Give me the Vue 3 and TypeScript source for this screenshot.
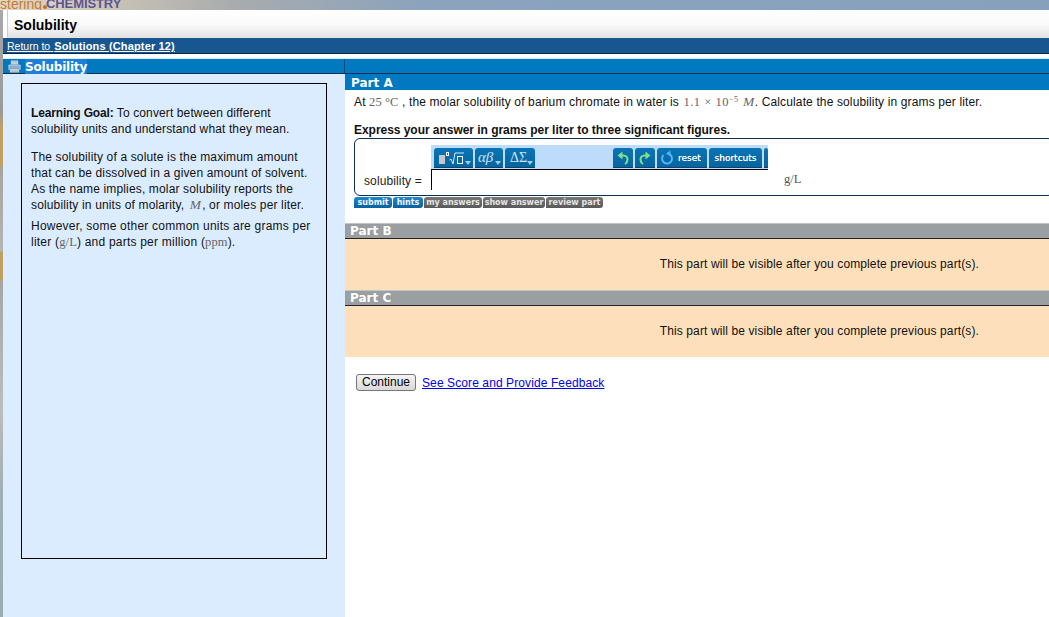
<script setup lang="ts">
const tabs = [
  { label: 'submit', blue: true, width: 38 },
  { label: 'hints', blue: true, width: 30 },
  { label: 'my answers', blue: false, width: 58 },
  { label: 'show answer', blue: false, width: 62 },
  { label: 'review part', blue: false, width: 57 },
]
const lockedParts = ['Part B', 'Part C']
</script>

<template>
  <div class="page">
    <div class="brand"><span class="ster">stering</span><span class="dot"></span><span class="chem">CHEMISTRY</span></div>
    <div class="body-wrap">
      <div class="edge"></div>
      <div class="main">
        <div class="title"><h1>Solubility</h1></div>
        <div class="crumb"><a href="#"><span class="ret">Return to</span> <b>Solutions (Chapter 12)</b></a></div>
        <div class="head">
          <div class="head-left">
            <svg class="printer" width="13" height="13" viewBox="0 0 13 13">
              <path d="M3 .5h7v4H3z" fill="#dfe9f3" stroke="#7f9db8" stroke-width=".7" />
              <path d="M4 1.800h5M4 3h5" stroke="#7f9db8" stroke-width=".6" />
              <path d="M.8 5h11.400v4.500H.8z" fill="#8fb0cc" stroke="#c9d9e8" stroke-width=".7" />
              <path d="M2 8.500h9v4H2z" fill="#e6eef6" stroke="#6f90ae" stroke-width=".7" />
              <path d="M3 10h7M3 11.300h7" stroke="#6f90ae" stroke-width=".6" />
            </svg>
            <span class="side-title">Solubility</span>
          </div>
        </div>
        <div class="columns">
          <aside class="side">
            <div class="goal">
              <p class="first"><b>Learning Goal:</b> To convert between different solubility units and understand what they mean.</p>
              <p class="second">The solubility of a solute is the maximum amount that can be dissolved in a given amount of solvent. As the name implies, molar solubility reports the solubility in units of molarity, <i class="m big side-m">M</i>, or moles per liter.</p>
              <p class="third">However, some other common units are grams per liter (<span class="m">g/L</span>) and parts per million (<span class="m">ppm</span>).</p>
            </div>
          </aside>
          <section class="content">
            <div class="part-bar blue">Part A</div>
            <div class="question">
              At <span class="m">25 °C</span> , the molar solubility of barium chromate in water is <span class="m gap">1.1 × 10<sup>−5</sup> <i class="big">M</i></span>. Calculate the solubility in grams per liter.
            </div>
            <div class="express">Express your answer in grams per liter to three significant figures.</div>
            <div class="answer-box">
              <span class="var">solubility =</span>
              <div class="editor">
                <div class="toolbar">
                  <div class="tool tool-tpl">
                    <svg width="26" height="14" viewBox="0 0 26 14" fill="none">
                      <rect x="0" y="4" width="6" height="9" fill="#c4c8cc" />
                      <rect x="7.500" y="1.500" width="2" height="3" stroke="#fff" stroke-width="1" />
                      <path d="M10.500 9l1.500-1 2 5L16 2h9" stroke="#d8e8f8" stroke-width="1" />
                      <rect x="18.500" y="5.500" width="5" height="7" stroke="#f0f6fc" stroke-width="1" />
                    </svg>
                    <span class="caret"></span>
                  </div>
                  <div class="tool tool-greek"><i>αβ</i><span class="caret"></span></div>
                  <div class="tool tool-greek delta">ΔΣ<span class="caret"></span></div>
                  <div class="spacer"></div>
                  <div class="tool tool-arrow">
                    <svg width="14" height="15" viewBox="0 0 14 15" fill="none"><path d="M6.500 1.500 1.500 5.500l5 4z" fill="#7fe08a" /><path d="M5.500 5.500h2c2.500 0 4 2 4 4 0 2-1 3.500-2.500 4.500" stroke="#7fe08a" stroke-width="2" /></svg>
                  </div>
                  <div class="tool tool-arrow">
                    <svg width="14" height="15" viewBox="0 0 14 15" fill="none"><path d="M7.500 1.500l5 4-5 4z" fill="#7fe08a" /><path d="M8.500 5.500h-2c-2.500 0-4 2-4 4 0 2 1 3.500 2.500 4.500" stroke="#7fe08a" stroke-width="2" /></svg>
                  </div>
                  <div class="tool tool-reset">
                    <svg width="14" height="15" viewBox="0 0 14 15" fill="none"><path d="M3.500 5a5 5 0 1 0 6-.8" stroke="#55b4f2" stroke-width="2" /><path d="M10.500 .5v6l-4.500-3z" fill="#55b4f2" /></svg>
                    <span>reset</span>
                  </div>
                  <div class="tool tool-text">shortcuts</div>
                  <div class="tool tool-stub"></div>
                </div>
                <div class="input-line"></div>
              </div>
              <span class="unit">g/L</span>
            </div>
            <div class="tabs">
              <span v-for="t in tabs" :key="t.label" class="tab" :class="{ 'tab-blue': t.blue }" :style="{ width: t.width + 'px' }">{{ t.label }}</span>
            </div>
            <template v-for="p in lockedParts" :key="p">
              <div class="part-bar grey">{{ p }}</div>
              <div class="locked">This part will be visible after you complete previous part(s).</div>
            </template>
            <div class="actions">
              <button class="continue" type="button">Continue</button>
              <a class="score" href="#">See Score and Provide Feedback</a>
            </div>
          </section>
        </div>
      </div>
    </div>
  </div>
</template>

<style>
html, body { margin: 0; padding: 0; overflow: hidden; background: #fff; }
</style>

<style scoped>
.page { width: 1049px; height: 617px; overflow: hidden; display: flex; flex-direction: column; font-family: "Liberation Sans", Arial, sans-serif; font-size: 12px; color: #000; background: #fff; }
.brand { height: 10px; flex: none; overflow: hidden; display: flex; align-items: flex-end; background: linear-gradient(90deg, #e0d8c8 0, #c5c0b4 12%, #a9acae 22%, #8ba3bd 40%, #87a1bd 100%); font-weight: bold; line-height: 14px; }
.ster { color: #c97a2c; font-size: 14px; font-weight: normal; margin-bottom: -1px; }
.dot { width: 4px; height: 4px; border-radius: 50%; background: #c6702a; margin: 0 -1px 1px 1px; flex: none; }
.chem { color: #5d5590; font-size: 13px; letter-spacing: -.1px; margin-bottom: -1px; }
.body-wrap { flex: 1; display: flex; min-height: 0; }
.edge { width: 3px; flex: none; background: linear-gradient(180deg, #a8a8a8 0, #9a9a9a 100px, #c0a060 120px, #c0a060 156px, #a8a49c 157px, #b4b4b4 241px, #c0a060 242px, #c0a060 270px, #a6a6a6 271px, #bcbcbc 400px, #a0b0b2 480px, #9aacae 100%); }
.main { flex: 1; min-width: 0; display: flex; flex-direction: column; }
.title { height: 28px; flex: none; margin-left: 4px; background: linear-gradient(180deg, #fff 0, #fafafa 50%, #e2e2e2 100%); display: flex; align-items: center; border-left: 1px solid #ccc; box-sizing: border-box; padding-top: 2px; }
.title h1 { margin: 0 0 0 6px; font-size: 14px; font-weight: bold; line-height: 16px; color: #000; }
.crumb { height: 15px; flex: none; padding-left: 4px; background: #17568f; border-bottom: 1px solid #0a2a48; font-size: 11px; line-height: 17px; }
.crumb a { color: #fff; text-decoration: underline; }
.crumb b { letter-spacing: .15px; margin-left: 1px; }
.ret { font-size: 10.500px; }
.head { margin-top: 4px; height: 14px; flex: none; background: #0079c0; border-top: 1px solid #d8ebfa; border-bottom: 1px solid #0f2f4f; }
.head-left { width: 342px; height: 14px; box-sizing: border-box; border-right: 1px solid #0f4f7f; display: flex; align-items: center; padding-left: 5px; gap: 4px; }
.printer { flex: none; }
.side-title { color: #fff; font-family: "DejaVu Sans", sans-serif; font-size: 12px; font-weight: bold; line-height: 14px; letter-spacing: -.2px; padding-top: 1px; background: #1f7fd8; }
.columns { flex: 1; min-height: 0; display: flex; }
.side { width: 342px; flex: none; background: #dcecff; padding-top: 9px; box-sizing: border-box; }
.goal { box-sizing: border-box; width: 306px; height: 476px; margin-left: 18px; border: 1px solid #000; padding: 21px 11px 0 9px; line-height: 16px; color: #111; letter-spacing: .12px; }
.goal p { margin: 0 0 5px; }
.goal p.first { margin-bottom: 12px; }
.goal p.second { letter-spacing: .15px; }
.goal p.third { letter-spacing: .22px; }
.goal b { letter-spacing: -.15px; }
.m { font-family: "Liberation Serif", serif; color: #666; font-size: 12.500px; letter-spacing: .1px; }
.big { font-size: 13.500px; }
.side-m { margin: 0 1px 0 2px; }
.gap { margin-left: 1px; letter-spacing: .5px; }
.gap i { margin-left: 1px; }
.m sup { font-size: 8px; line-height: 0; vertical-align: 4px; }
.content { flex: 1; min-width: 0; }
.part-bar { box-sizing: border-box; height: 16px; padding-left: 5px; color: #fff; font-family: "DejaVu Sans", sans-serif; font-size: 12px; font-weight: bold; }
.part-bar.blue { background: #0079c0; line-height: 18px; padding-left: 6px; }
.part-bar.grey { background: #9a9fa1; border-top: 1px solid #c2c5c6; border-bottom: 1px solid #222; line-height: 15px; }
.question { padding: 4px 0 0 9px; line-height: 16px; height: 16px; color: #111; letter-spacing: .13px; white-space: nowrap; }
.express { margin: 13px 0 0 9px; font-weight: bold; line-height: 14px; height: 14px; color: #111; letter-spacing: -.04px; }
.answer-box { box-sizing: border-box; height: 58px; margin: 1px -5px 0 9px; border: 1px solid #0f2f4f; border-radius: 6px; display: flex; }
.var { margin: 34px 0 0 9px; width: 67px; flex: none; line-height: 16px; color: #222; letter-spacing: .12px; }
.editor { width: 337px; flex: none; margin-top: 6px; }
.toolbar { height: 25px; box-sizing: border-box; background: #bddcfb; display: flex; align-items: flex-start; padding: 3px 0 0 3px; gap: 2px; border-bottom: 1px solid #000; }
.tool { height: 20px; box-sizing: border-box; background: linear-gradient(180deg, #0a75b6, #07649f); border-radius: 3px 3px 0 0; border-bottom: 1px solid #06456f; color: #dcecff; display: flex; align-items: center; position: relative; flex: none; }
.tool-tpl { width: 39px; padding-left: 5px; }
.caret { position: absolute; right: 2px; bottom: 2px; border-left: 3px solid transparent; border-right: 3px solid transparent; border-top: 4px solid #9ccbf0; }
.tool-greek { width: 28px; padding-left: 3px; font-family: "Liberation Serif", serif; font-size: 15px; color: #cfe4fa; }
.delta { width: 30px; padding-left: 5px; font-size: 14px; }
.spacer { width: 74px; flex: none; }
.tool-arrow { width: 20px; justify-content: center; }
.tool-reset { width: 50px; padding-left: 3px; gap: 4px; font-family: "DejaVu Sans", sans-serif; font-size: 9px; color: #fff; text-shadow: 0 0 .5px #fff; }
.tool-text { width: 53px; justify-content: center; font-family: "DejaVu Sans", sans-serif; font-size: 9px; color: #fff; text-shadow: 0 0 .5px #fff; }
.tool-stub { width: 4px; }
.input-line { width: 1px; height: 20px; background: #000; }
.unit { font-family: "Liberation Serif", serif; color: #555; margin: 32px 0 0 16px; line-height: 16px; font-size: 12.500px; }
.tabs { display: flex; height: 11px; margin: 1px 0 15px 9px; gap: 1px; }
.tab { box-sizing: border-box; height: 11px; background: linear-gradient(180deg, #777 0, #5a5a5a 100%); border-radius: 3px 3px 3px 0; color: #e4e4e4; font-family: "DejaVu Sans", sans-serif; font-size: 8px; font-weight: bold; line-height: 11px; text-align: center; white-space: nowrap; overflow: hidden; }
.tab-blue { background: linear-gradient(180deg, #1d88cc 0, #0b5f9e 100%); color: #eef6ff; }
.locked { height: 51px; background: #fde0bb; text-align: right; padding-right: 70px; line-height: 51px; color: #111; letter-spacing: .115px; }
.actions { margin: 17px 0 0 11px; display: flex; align-items: center; gap: 6px; }
.continue { box-sizing: border-box; height: 17px; width: 60px; padding: 0; border: 1px solid #777; border-radius: 3px; background: linear-gradient(180deg, #f4f4f4, #d8d8d8); font-family: "Liberation Sans", Arial, sans-serif; font-size: 12px; line-height: 15px; color: #000; }
.score { color: #0000ee; text-decoration: underline; font-size: 12px; letter-spacing: .1px; }
</style>
